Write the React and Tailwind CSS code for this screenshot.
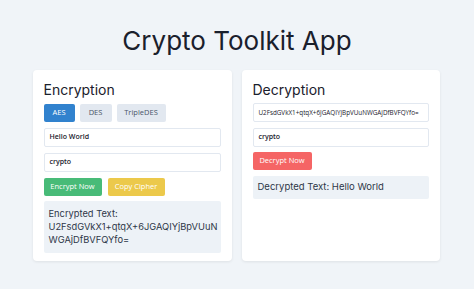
import { useState } from "react"

const inter = { fontFamily: "Inter, 'Open Sans', sans-serif" }

const Btn = ({ children, className }) => (
  <button
    className={`flex h-[18px] items-center justify-center whitespace-nowrap rounded-[2px] text-[7.5px] leading-none text-white ${className}`}
    style={{ fontFamily: "'Open Sans', sans-serif" }}
  >
    {children}
  </button>
)

const Field = ({ value, className = "text-[7px] font-semibold" }) => (
  <div
    className={`flex h-[19px] items-center overflow-hidden whitespace-nowrap rounded-[2px] border border-[#e2e8f0] bg-white px-[5px] text-[#1a202c] ${className}`}
    style={{ fontFamily: "'Open Sans', sans-serif" }}
  >
    {value}
  </div>
)

export default function App() {
  const [algo] = useState("AES")
  const algos = [
    ["AES", "w-[31px]"],
    ["DES", "w-[32px]"],
    ["TripleDES", "w-[49px]"],
  ]

  return (
    <div className="flex h-[289px] w-[474px] flex-col items-center bg-[#f0f4f8] text-[#1a202c]" style={inter}>
      <h1 className="mt-[24px] text-[26px] font-normal leading-[34px]">Crypto Toolkit App</h1>

      <div className="mt-[12px] ml-[-2px] flex gap-[10px]">
        <div className="flex h-[191px] w-[199px] flex-col rounded-[4px] bg-white px-[11px] pt-[11px] shadow-[0_1px_3px_rgba(0,0,0,0.08)]">
          <h2 className="text-[14px] leading-[18px]">Encryption</h2>
          <div className="mt-[5px] flex gap-[5px]">
            {algos.map(([a, w]) => (
              <Btn key={a} className={`${w} ${a === algo ? "bg-[#3182ce]" : "bg-[#e2e8f0] !text-[#4a5568]"}`}>
                {a}
              </Btn>
            ))}
          </div>
          <div className="mt-[6px] flex flex-col gap-[6px]">
            <Field value="Hello World" />
            <Field value="crypto" />
          </div>
          <div className="mt-[6px] flex gap-[6px]">
            <Btn className="w-[58px] bg-[#48bb78]">Encrypt Now</Btn>
            <Btn className="w-[57px] bg-[#ecc94b]">Copy Cipher</Btn>
          </div>
          <div className="mt-[5px] rounded-[2px] bg-[#edf2f7] px-[5px] pt-[6px] pb-[7px] text-[9.3px] leading-[13px] text-[#2d3748] whitespace-nowrap">
            <div>Encrypted Text:</div>
            <div>U2FsdGVkX1+qtqX+6JGAQIYjBpVUuN</div>
            <div>WGAjDfBVFQYfo=</div>
          </div>
        </div>

        <div className="flex h-[191px] w-[198px] flex-col rounded-[4px] bg-white px-[11px] pt-[11px] shadow-[0_1px_3px_rgba(0,0,0,0.08)]">
          <h2 className="text-[14px] leading-[18px]">Decryption</h2>
          <div className="mt-[4px] flex flex-col gap-[6px]">
            <Field value="U2FsdGVkX1+qtqX+6JGAQIYjBpVUuNWGAjDfBVFQYfo=" className="text-[6.3px] font-normal" />
            <Field value="crypto" />
          </div>
          <div className="mt-[5px] flex">
            <Btn className="w-[59px] bg-[#f56565]">Decrypt Now</Btn>
          </div>
          <div className="mt-[6px] flex h-[23px] items-center rounded-[2px] bg-[#edf2f7] px-[5px] text-[9.5px] text-[#2d3748]">
            Decrypted Text: Hello World
          </div>
        </div>
      </div>
    </div>
  )
}
